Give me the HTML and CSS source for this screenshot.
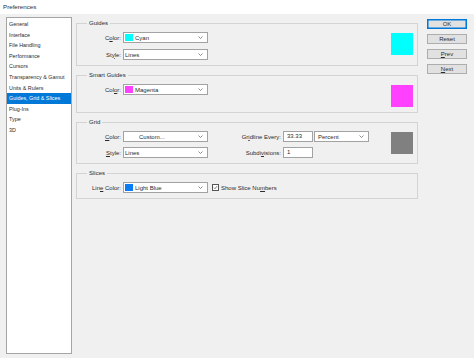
FILE: index.html
```html
<!DOCTYPE html>
<html lang="en">
<head>
    <meta charset="UTF-8">
    <title>Preferences</title>
    <link rel="stylesheet" href="styles.css">
</head>
<body>
    <div class="titlebar">Preferences</div>

    <div class="dialog">
        <ul class="nav">
            <li>General</li>
            <li>Interface</li>
            <li>File Handling</li>
            <li>Performance</li>
            <li>Cursors</li>
            <li>Transparency &amp; Gamut</li>
            <li>Units &amp; Rulers</li>
            <li class="active">Guides, Grid &amp; Slices</li>
            <li>Plug-Ins</li>
            <li>Type</li>
            <li>3D</li>
        </ul>

        <div class="panel">
            <fieldset class="group">
                <legend>Guides</legend>
                <div class="group-body">
                    <div class="fields">
                        <span class="lbl">C<u>o</u>lor:</span>
                        <div class="select"><span class="chip chip-cyan"></span>Cyan<svg class="caret" viewBox="0 0 5 3"><path d="M0.5 0.5 L2.5 2.5 L4.5 0.5"/></svg></div>
                        <span class="lbl">St<u>y</u>le:</span>
                        <div class="select">Lines<svg class="caret" viewBox="0 0 5 3"><path d="M0.5 0.5 L2.5 2.5 L4.5 0.5"/></svg></div>
                    </div>
                    <div class="swatch swatch-cyan"></div>
                </div>
            </fieldset>

            <fieldset class="group">
                <legend>Smart Guides</legend>
                <div class="group-body">
                    <div class="fields">
                        <span class="lbl">Col<u>o</u>r:</span>
                        <div class="select"><span class="chip chip-magenta"></span>Magenta<svg class="caret" viewBox="0 0 5 3"><path d="M0.5 0.5 L2.5 2.5 L4.5 0.5"/></svg></div>
                    </div>
                    <div class="swatch swatch-magenta"></div>
                </div>
            </fieldset>

            <fieldset class="group">
                <legend>Grid</legend>
                <div class="group-body">
                    <div class="fields fields-grid">
                        <span class="lbl"><u>C</u>olor:</span>
                        <div class="select select-custom">Custom...<svg class="caret" viewBox="0 0 5 3"><path d="M0.5 0.5 L2.5 2.5 L4.5 0.5"/></svg></div>
                        <span class="lbl">Gr<u>i</u>dline Every:</span>
                        <div class="input">33.33</div>
                        <div class="select select-unit">Percent<svg class="caret" viewBox="0 0 5 3"><path d="M0.5 0.5 L2.5 2.5 L4.5 0.5"/></svg></div>
                        <span class="lbl"><u>S</u>tyle:</span>
                        <div class="select">Lines<svg class="caret" viewBox="0 0 5 3"><path d="M0.5 0.5 L2.5 2.5 L4.5 0.5"/></svg></div>
                        <span class="lbl">Subdi<u>v</u>isions:</span>
                        <div class="input">1</div>
                    </div>
                    <div class="swatch swatch-gray"></div>
                </div>
            </fieldset>

            <fieldset class="group">
                <legend>Slices</legend>
                <div class="group-body">
                    <div class="fields">
                        <span class="lbl">Lin<u>e</u> Color:</span>
                        <div class="select"><span class="chip chip-blue"></span>Light Blue<svg class="caret" viewBox="0 0 5 3"><path d="M0.5 0.5 L2.5 2.5 L4.5 0.5"/></svg></div>
                    </div>
                    <label class="check">
                        <span class="box"><svg viewBox="0 0 6 6"><path d="M1 3 L2.4 4.5 L5 1.2"/></svg></span>
                        Show Slice Nu<u>m</u>bers
                    </label>
                </div>
            </fieldset>
        </div>

        <div class="buttons">
            <div class="btn btn-default">OK</div>
            <div class="btn">Reset</div>
            <div class="btn"><u>P</u>rev</div>
            <div class="btn"><u>N</u>ext</div>
        </div>
    </div>
</body>
</html>
```

FILE: styles.css
```css
body {
    margin: 0;
    width: 474px;
    height: 358px;
    overflow: hidden;
    background: #f0f0f0;
    font-family: "Liberation Sans", Arial, sans-serif;
    font-size: 6px;
    color: #2b2b2b;
}
u {
    text-underline-offset: 1px;
}
.titlebar {
    height: 14px;
    line-height: 13px;
    padding-left: 3px;
    background: #fff;
    font-size: 6.2px;
}
.dialog {
    display: flex;
    align-items: flex-start;
    padding: 3px 0 0 6px;
}
.nav {
    list-style: none;
    margin: 0;
    padding: 1px 0;
    width: 64px;
    height: 333px;
    background: #fff;
    border: 1px solid #a5a5a5;
    font-size: 5.4px;
}
.nav li {
    height: 10.6px;
    line-height: 11.4px;
    padding-left: 2px;
    white-space: nowrap;
}
.nav li.active {
    background: #0078d7;
    color: #fff;
}
.panel {
    width: 342px;
    margin: 2px 0 0 4px;
    display: flex;
    flex-direction: column;
    gap: 5px;
}
.group {
    margin: 0;
    min-width: 0;
    border: 1px solid #d3d3d3;
    padding: 5px 4px 5px 1px;
}
.group legend {
    margin-left: 9px;
    padding: 0 2px;
    line-height: 8px;
}
.group-body {
    display: flex;
    align-items: flex-start;
}
.fields {
    display: grid;
    grid-template-columns: 43px 85px;
    column-gap: 2px;
    row-gap: 6px;
    align-items: center;
}
.fields-grid {
    grid-template-columns: 43px 85px 71px 30px 54px;
    row-gap: 5px;
}
.lbl {
    text-align: right;
    white-space: nowrap;
}
.select {
    position: relative;
    display: flex;
    align-items: center;
    height: 11px;
    box-sizing: border-box;
    border: 1px solid #a2a2a2;
    background: #fff;
    padding-left: 1px;
}
.select-custom {
    padding-left: 15px;
}
.select-unit {
    margin-left: -1px;
    padding-left: 3px;
}
.caret {
    position: absolute;
    right: 4px;
    top: 3px;
    width: 5px;
    height: 3px;
    fill: none;
    stroke: #707070;
    stroke-width: 0.8;
}
.chip {
    width: 8px;
    height: 7px;
    margin-right: 2px;
}
.chip-cyan { background: #00ffff; }
.chip-magenta { background: #ff40ff; }
.chip-blue { background: #0a7cf8; }
.input {
    height: 11px;
    box-sizing: border-box;
    border: 1px solid #a2a2a2;
    background: #fff;
    padding-left: 3px;
    line-height: 9px;
}
.swatch {
    width: 22px;
    height: 22px;
    margin-left: auto;
    margin-top: 1px;
}
.swatch-cyan { background: #00ffff; }
.swatch-magenta { background: #ff40ff; }
.swatch-gray { background: #808080; }
.check {
    display: flex;
    align-items: center;
    height: 11px;
    margin-left: 4px;
}
.box {
    display: flex;
    align-items: center;
    justify-content: center;
    width: 7px;
    height: 7px;
    box-sizing: border-box;
    border: 1px solid #555;
    background: #fff;
    margin-right: 2px;
}
.box svg {
    width: 5px;
    height: 5px;
    fill: none;
    stroke: #333;
    stroke-width: 0.7;
}
.buttons {
    display: flex;
    flex-direction: column;
    gap: 5px;
    margin: 2px 0 0 9px;
    width: 40px;
}
.btn {
    height: 10px;
    box-sizing: border-box;
    border: 1px solid #adadad;
    background: #e1e1e1;
    text-align: center;
    line-height: 8px;
}
.btn-default {
    border-color: #0078d7;
    box-shadow: inset 0 0 0 0.5px #0078d7;
}
```
